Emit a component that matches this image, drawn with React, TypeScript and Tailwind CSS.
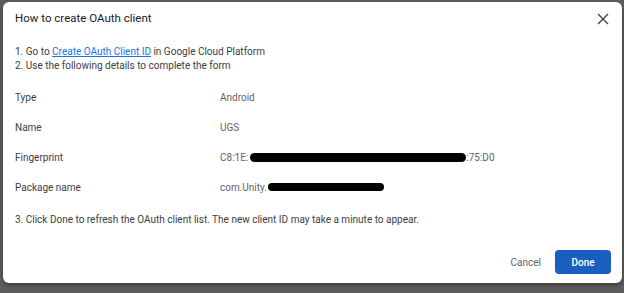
import React from "react";

export default function App() {
  const rows: { label: string; value: React.ReactNode }[] = [
    { label: "Type", value: "Android" },
    { label: "Name", value: "UGS" },
    {
      label: "Fingerprint",
      value: (
        <span className="flex items-center">
          <span>C8:1E:</span>
          <span className="inline-block h-[9px] w-[216px] rounded-full bg-black ml-[2px]" />
          <span>:75:D0</span>
        </span>
      ),
    },
    {
      label: "Package name",
      value: (
        <span className="flex items-center">
          <span>com.Unity.</span>
          <span className="inline-block h-[8px] w-[116px] rounded-full bg-black ml-[1px]" />
        </span>
      ),
    },
  ];
  return (
    <div
      className="w-[624px] h-[293px] bg-[#5d5d5d] pt-[2px] pl-[3px] overflow-hidden"
      style={{ fontFamily: "Roboto, 'Liberation Sans', sans-serif" }}
    >
      <div className="w-[619px] h-[281px] bg-white rounded-[6px] shadow-[0_2px_4px_rgba(0,0,0,0.4)] flex flex-col">
        <div className="flex items-center justify-between h-[32px] pl-[12px] pr-[12px] pt-[2px]">
          <div className="text-[11.5px] text-[#202124]">How to create OAuth client</div>
          <svg width="12" height="12" viewBox="0 0 12 12" className="mr-[1px]">
            <path d="M1 1L11 11M11 1L1 11" stroke="#3c4043" strokeWidth="1.4" />
          </svg>
        </div>
        <div className="pl-[12px] pt-[11px] text-[10px] leading-[14px] text-[#3c4043]">
          <div>
            1. Go to{" "}
            <span className="text-[#1a73e8] underline underline-offset-1">Create OAuth Client ID</span> in
            Google Cloud Platform
          </div>
          <div>2. Use the following details to complete the form</div>
        </div>
        <div className="pl-[12px] pt-[9px] text-[10px] text-[#3c4043]">
          {rows.map((r) => (
            <div key={r.label} className="flex items-center h-[30px]">
              <div className="w-[205px]">{r.label}</div>
              <div className="text-[#5f6368]">{r.value}</div>
            </div>
          ))}
        </div>
        <div className="pl-[12px] pt-[10px] text-[10px] text-[#3c4043]">
          3. Click Done to refresh the OAuth client list. The new client ID may take a minute to appear.
        </div>
        <div className="flex-1" />
        <div className="flex items-center justify-end gap-[14px] pr-[11px] pb-[9px]">
          <div className="text-[10px] text-[#5f6368]">Cancel</div>
          <div className="w-[56px] h-[24px] rounded-[4px] bg-[#1a5fc0] text-white text-[10px] font-medium flex items-center justify-center">
            Done
          </div>
        </div>
      </div>
    </div>
  );
}
